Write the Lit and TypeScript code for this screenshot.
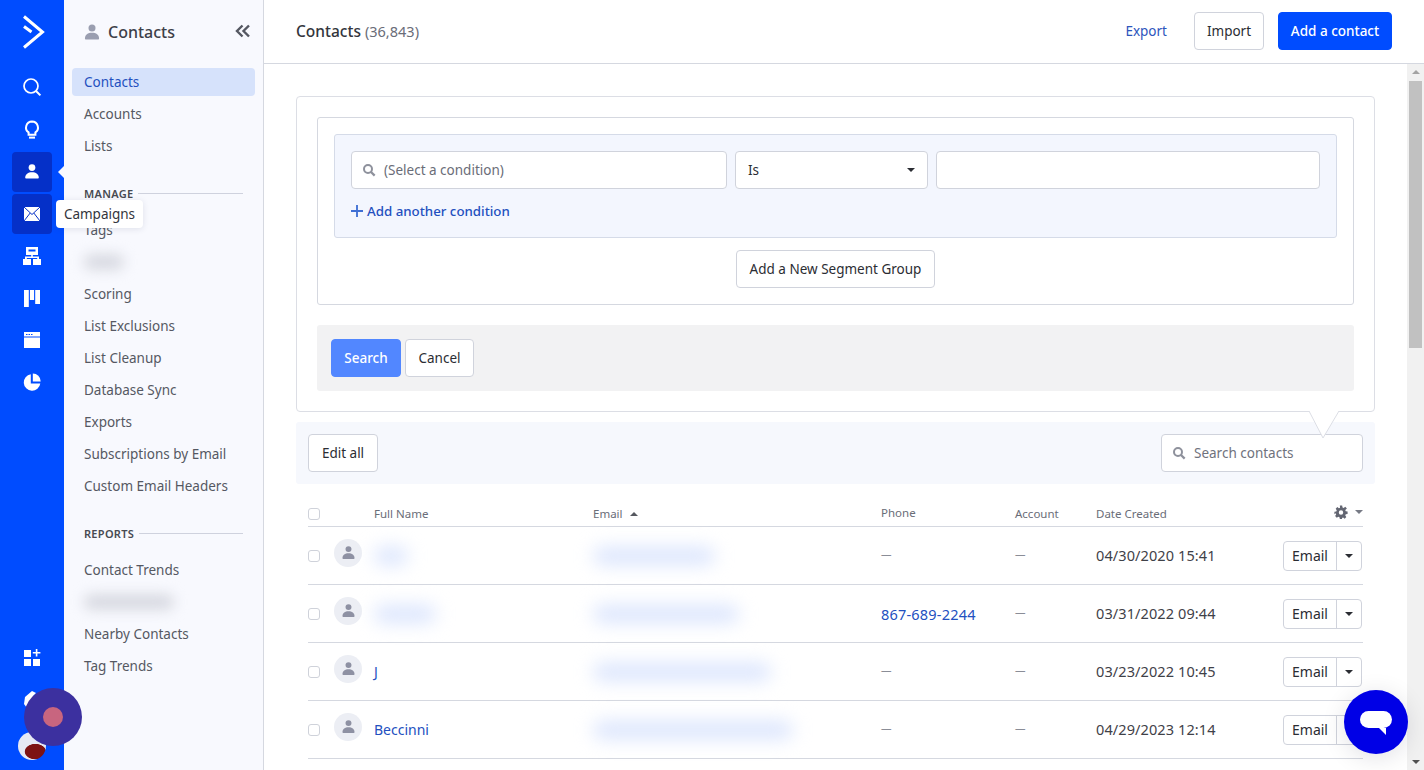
import { LitElement, html, css, svg } from 'lit'
import { customElement } from 'lit/decorators.js'

const person = svg`<circle cx="12" cy="7.200" r="4.200"/><path d="M3.500 20c0-4.600 3.600-7 8.500-7s8.500 2.400 8.500 7c0 .6-.4 1-1 1h-15c-.6 0-1-.4-1-1z"/>`

const railTop = [
    svg`<circle cx="11" cy="10" r="7" fill="none" stroke="#fff" stroke-width="1.700"/><path d="M16 15l4.400 4.400" stroke="#fff" stroke-width="2" fill="none"/>`,
    svg`<path d="M12 3.500a6 6 0 0 0-3.400 10.900v2.400h6.800v-2.400A6 6 0 0 0 12 3.500z" fill="none" stroke="#fff" stroke-width="2"/><path d="M9 19.600h6" stroke="#fff" stroke-width="2"/>`,
    svg`<g transform="translate(2.400 1.800) scale(.8)">${person}</g>`,
    svg`<path d="M4 5h16v14H4z" fill="#fff"/><path d="M4 5l8 7.500L20 5M4 19l6.200-8M20 19l-6.200-8" fill="none" stroke="#0530c8" stroke-width="1"/>`,
    svg`<path fill-rule="evenodd" d="M6 3h12v8h-5.200v1.400H19V15h2v6h-8v-6h4.200v-1H6.800v1H11v6H3v-6h2v-2.600h6.200V11H6zM8.500 5.500v2h7v-2z"/>`,
    svg`<path d="M4 4h4.800v17H4zM9.900 4h4.200v10H9.900zM15.200 4H20v14h-4.800z"/>`,
    svg`<path fill-rule="evenodd" d="M4 4h16v16H4zM4 9.500h16v-1H4zM6 6h1.500v1H6zm2.500 0H10v1H8.500zm2.500 0h1.500v1H11z"/>`,
    svg`<path d="M10.800 4.200A8.300 8.300 0 1 0 20.300 13.500h-9.500z"/><path d="M12.800 3.500v7.900h7.900a8 8 0 0 0-7.900-7.900z"/>`,
]

const apps = svg`<path d="M4 4h7v7H4zM4 13h7v7H4zM13 13h7v7h-7zM15.800 3h1.600v3h3v1.600h-3v3h-1.600v-3h-3V6h3z"/>`

const mag = svg`<circle cx="10.500" cy="10.500" r="6" fill="none" stroke="currentColor" stroke-width="3"/><path d="M15 15l5.500 5.500" stroke="currentColor" stroke-width="3.400" fill="none"/>`

const navMain = ['Contacts', 'Accounts', 'Lists']
// numbers are blurred-out entries, value is the width of the smudge
const navManage = ['Tags', 40, 'Scoring', 'List Exclusions', 'List Cleanup', 'Database Sync', 'Exports', 'Subscriptions by Email', 'Custom Email Headers']
const navReports = ['Contact Trends', 90, 'Nearby Contacts', 'Tag Trends']

const rows = [
    { nameBlur: 34, emailBlur: 122, phone: '', date: '04/30/2020 15:41' },
    { nameBlur: 62, emailBlur: 146, phone: '867-689-2244', date: '03/31/2022 09:44' },
    { name: 'J', emailBlur: 178, phone: '', date: '03/23/2022 10:45' },
    { name: 'Beccinni', emailBlur: 200, phone: '', date: '04/29/2023 12:14' },
]

@customElement('app-root')
export class AppRoot extends LitElement {
    static styles = css`
        :host {
            display: block;
            position: relative;
            width: 1424px;
            height: 770px;
            overflow: hidden;
            font-family: 'Noto Sans', 'Liberation Sans', sans-serif;
            font-size: 14px;
            color: #2b2d33;
            background: #fff;
        }
        * {
            box-sizing: border-box;
        }
        .app {
            display: flex;
            height: 770px;
        }

        /* icon rail */
        .rail {
            width: 64px;
            flex: none;
            background: #004cff;
            display: flex;
            flex-direction: column;
            align-items: center;
        }
        .logo {
            height: 68px;
            display: flex;
            align-items: center;
            justify-content: center;
            padding: 0 0 4px 3px;
        }
        .rail-item {
            width: 40px;
            height: 40px;
            margin-bottom: 2px;
            border-radius: 4px;
            display: flex;
            align-items: center;
            justify-content: center;
            fill: #fff;
            flex: none;
        }
        .rail-item svg {
            width: 24px;
            height: 24px;
        }
        .rail-item.on {
            background: #0530c8;
        }
        .rail-item.current {
            position: relative;
        }
        .rail-item.current::after {
            content: '';
            position: absolute;
            right: -12px;
            top: 14px;
            border: 6px solid transparent;
            border-left: none;
            border-right-color: #f8f9fe;
        }
        .rail-bottom {
            margin-top: auto;
            display: flex;
            flex-direction: column;
            align-items: center;
            padding-bottom: 10px;
        }
        .avatar-me {
            width: 28px;
            height: 28px;
            border-radius: 50%;
            margin-top: 10px;
            background: radial-gradient(ellipse 11px 8px at 62% 70%, #7d1212 92%, transparent 100%), #e6e9f4;
        }

        /* secondary nav */
        .side {
            width: 200px;
            flex: none;
            background: #f8f9fe;
            border-right: 1px solid #d5d8e0;
            padding: 0 8px;
        }
        .side-head {
            height: 64px;
            display: flex;
            align-items: center;
            padding: 0 4px 0 10px;
            font-size: 16px;
            font-weight: 500;
            color: #3d4048;
        }
        .side-head svg {
            width: 20px;
            height: 20px;
            fill: #9a9eb0;
            margin-right: 6px;
        }
        .side-head .collapse {
            margin: 0 0 2px auto;
            width: 16px;
            height: 16px;
            fill: none;
            stroke: #555862;
            stroke-width: 2.400;
        }
        .nav {
            display: flex;
            flex-direction: column;
            gap: 4px;
            padding-top: 4px;
        }
        .nav-item {
            height: 28px;
            line-height: 28px;
            padding-left: 12px;
            border-radius: 4px;
            color: #555862;
            font-size: 13.500px;
        }
        .nav-item.active {
            background: #d6e2fb;
            color: #2350bf;
        }
        .nav-item .smudge {
            display: block;
            height: 14px;
            margin-top: 7px;
            border-radius: 7px;
            background: #d3d5dd;
            filter: blur(7px);
        }
        .nav-head {
            display: flex;
            align-items: center;
            gap: 5px;
            margin: 26px 0 10px;
            padding: 0 12px 2px;
            font-size: 11px;
            font-weight: 600;
            color: #474a52;
            letter-spacing: 0.3px;
            height: 16px;
        }
        .nav-head::after {
            content: '';
            flex: 1;
            border-top: 1px solid #cfd2de;
        }

        /* main column */
        .main {
            flex: 1;
            min-width: 0;
            display: flex;
            flex-direction: column;
        }
        .top {
            height: 64px;
            flex: none;
            border-bottom: 1px solid #d5d8e0;
            display: flex;
            align-items: center;
            padding: 0 32px 1px;
        }
        .top h1 {
            margin: 0;
            font-size: 15.500px;
            font-weight: 500;
            color: #33353c;
        }
        .top .count {
            margin: 0 0 0 4px;
            color: #6a6d78;
            font-size: 14.500px;
        }
        .top .export {
            margin: 0 27px 0 auto;
            color: #2d55bd;
            font-size: 13.500px;
        }
        .btn {
            height: 38px;
            display: inline-flex;
            align-items: center;
            justify-content: center;
            border: 1px solid #d0d3dc;
            border-radius: 4px;
            background: #fff;
            color: #2b2d33;
            font-size: 13.500px;
            padding-bottom: 1px;
            flex: none;
        }
        .btn.import {
            width: 70px;
            margin-right: 14px;
        }
        .btn.primary {
            width: 114px;
            background: #004cff;
            border-color: #004cff;
            color: #fff;
            font-weight: 500;
        }
        .body {
            flex: 1;
            min-height: 0;
            display: flex;
        }
        .scroll {
            flex: 1;
            min-width: 0;
            overflow: hidden;
            padding: 32px 32px 0;
        }

        /* fake scrollbar, matches the browser's own */
        .bar {
            width: 17px;
            flex: none;
            background: #f1f1f1;
            display: flex;
            flex-direction: column;
            align-items: center;
            padding: 6px 0;
        }
        .bar i {
            width: 0;
            height: 0;
            border: 4px solid transparent;
            flex: none;
        }
        .bar .up {
            border-top: none;
            border-bottom-color: #a3a3a3;
        }
        .bar .down {
            border-bottom: none;
            border-top-color: #505050;
            margin-top: auto;
        }
        .bar .thumb {
            width: 13px;
            height: 267px;
            margin-top: 7px;
            background: #c1c1c1;
        }

        /* segment builder */
        .panel {
            height: 316px;
            border: 1px solid #dcdee5;
            border-radius: 4px;
            padding: 20px;
        }
        .group {
            height: 188px;
            border: 1px solid #d5d8e0;
            border-radius: 3px;
            padding: 16px;
        }
        .cond {
            height: 104px;
            background: #f3f6fe;
            border: 1px solid #d5dbe8;
            border-radius: 3px;
            padding: 16px;
        }
        .cond-row {
            display: flex;
            gap: 8px;
        }
        .field {
            height: 38px;
            border: 1px solid #d0d3dc;
            border-radius: 4px;
            background: #fff;
            display: flex;
            align-items: center;
            padding: 0 12px 1px;
            color: #2b2d33;
            font-size: 13.500px;
        }
        .field svg {
            width: 16px;
            height: 16px;
            color: #8e919c;
            margin: 0 7px 0 -3px;
            flex: none;
        }
        .field.cond-name {
            width: 376px;
            color: #6a6d78;
        }
        .field.cond-op {
            width: 193px;
        }
        .field.cond-val {
            width: 384px;
        }
        .caret {
            width: 0;
            height: 0;
            border: 4px solid transparent;
            border-bottom: none;
            border-top-color: #2b2d33;
            margin-left: auto;
            flex: none;
        }
        .add-cond {
            display: flex;
            align-items: center;
            gap: 4px;
            margin-top: 11px;
            color: #2350bf;
            font-weight: 500;
            font-size: 13.300px;
            height: 22px;
        }
        .add-cond svg {
            width: 12px;
            height: 12px;
            stroke: #3f6fd4;
            stroke-width: 2;
        }
        .group-foot {
            display: flex;
            justify-content: center;
            margin-top: 12px;
        }
        .group-foot .btn {
            width: 199px;
        }
        .actions {
            height: 66px;
            margin-top: 20px;
            background: #f2f2f3;
            border-radius: 3px;
            display: flex;
            align-items: center;
            gap: 4px;
            padding-left: 14px;
        }
        .btn.search {
            width: 70px;
            background: #5287ff;
            border-color: #5287ff;
            color: #fff;
            font-weight: 500;
        }
        .btn.cancel {
            width: 69px;
        }

        /* list */
        .toolbar {
            height: 62px;
            margin-top: 10px;
            background: #f6f8fd;
            border-radius: 3px;
            display: flex;
            align-items: center;
            justify-content: space-between;
            padding: 0 12px;
            position: relative;
        }
        .btn.edit {
            width: 70px;
        }
        .search-box {
            width: 202px;
            color: #6f727d;
        }
        .pointer {
            position: absolute;
            right: 36px;
            top: -11px;
            width: 30px;
            height: 28px;
        }
        .table {
            padding: 0 12px;
        }
        .row {
            display: grid;
            grid-template-columns: 26px 40px 219px 288px 134px 81px 1fr 80px;
            align-items: center;
            border-bottom: 1px solid #d5d8e0;
            height: 58px;
        }
        .row.head {
            height: 43px;
            font-size: 11.500px;
            color: #6a6d78;
            padding-top: 17px;
        }
        .row.head .phone-head {
            margin-top: -2px;
        }
        .check {
            width: 12px;
            height: 12px;
            border: 1px solid #cfd2da;
            border-radius: 3px;
            background: #fff;
        }
        .pic {
            width: 28px;
            height: 28px;
            border-radius: 50%;
            background: #eceef4;
            display: flex;
            align-items: center;
            justify-content: center;
            margin: -6px 0 0 0;
            fill: #8e91a3;
        }
        .pic svg {
            width: 17px;
            height: 17px;
        }
        .name,
        .phone {
            color: #2350bf;
            font-size: 14px;
        }
        .phone {
            font-size: 14.500px;
            letter-spacing: 0.2px;
        }
        .blur {
            display: block;
            height: 18px;
            border-radius: 9px;
            background: #dbe5fd;
            filter: blur(9px);
        }
        .dash {
            display: block;
            color: #8a8d97;
            font-size: 10.500px;
            margin-top: -3px;
        }
        .date {
            color: #3f4148;
            font-size: 14.500px;
            letter-spacing: 0.1px;
            padding-bottom: 1px;
        }
        .sort {
            display: inline-block;
            width: 0;
            height: 0;
            border: 4px solid transparent;
            border-top: none;
            border-bottom-color: #55585f;
            margin-left: 7px;
            vertical-align: 2px;
        }
        .gear {
            display: flex;
            align-items: center;
            justify-content: flex-end;
            gap: 7px;
            margin-top: -3px;
            color: #636672;
        }
        .gear svg {
            width: 14px;
            height: 14px;
            fill: #636672;
        }
        .gear .caret {
            margin-left: 0;
            border-top-color: #777a85;
        }
        .split {
            display: flex;
            height: 30px;
            border: 1px solid #d0d3dc;
            border-radius: 4px;
            width: 79px;
            justify-self: end;
            margin-right: 1px;
        }
        .split span {
            width: 53px;
            display: flex;
            align-items: center;
            justify-content: center;
            border-right: 1px solid #d0d3dc;
            padding-bottom: 1px;
        }
        .split div {
            flex: 1;
            display: flex;
            align-items: center;
            justify-content: center;
        }
        .split .caret {
            margin: 0;
        }

        /* floating stuff */
        .tip {
            position: absolute;
            left: 56px;
            top: 200px;
            width: 87px;
            height: 28px;
            line-height: 28px;
            text-align: center;
            background: #fff;
            border-radius: 4px;
            box-shadow: 0 1px 6px rgba(40, 50, 90, 0.12);
            font-size: 13.500px;
            color: #33353c;
        }
        .rec {
            position: absolute;
            left: 24px;
            top: 688px;
            width: 58px;
            height: 58px;
            border-radius: 50%;
            background: #3c309f;
            display: flex;
            align-items: center;
            justify-content: center;
        }
        .rec span {
            width: 20px;
            height: 20px;
            border-radius: 50%;
            background: #c8657f;
        }
        .chat {
            position: absolute;
            left: 1344px;
            top: 690px;
            width: 64px;
            height: 64px;
            border-radius: 50%;
            background: #0000e6;
            box-shadow: 0 4px 24px rgba(0, 0, 40, 0.12);
            display: flex;
            align-items: center;
            justify-content: center;
        }
        .chat svg {
            width: 34px;
            height: 28px;
            fill: #fff;
        }
    `

    private navItem(item: string | number, active = false) {
        if (typeof item === 'number') {
            return html`<div class="nav-item"><span class="smudge" style="width:${item}px"></span></div>`
        }
        return html`<div class="nav-item ${active ? 'active' : ''}">${item}</div>`
    }

    render() {
        return html`
            <div class="app">
                <div class="rail">
                    <div class="logo">
                        <svg width="24" height="34" viewBox="0 0 24 34" fill="none" stroke="#fff" stroke-width="3">
                            <path d="M2 1.500L20.500 17 2 32.500" />
                            <path d="M2 11.500l7.500 5.500" />
                        </svg>
                    </div>
                    ${railTop.map(
                        (icon, i) => html`
                            <div class="rail-item ${i === 2 || i === 3 ? 'on' : ''} ${i === 2 ? 'current' : ''}">
                                <svg viewBox="0 0 24 24">${icon}</svg>
                            </div>
                        `
                    )}
                    <div class="rail-bottom">
                        <div class="rail-item"><svg viewBox="0 0 24 24">${apps}</svg></div>
                        <div class="rail-item">
                            <svg viewBox="0 0 24 24"><path d="M5 9l7-6 4 2-3 3 3 3-9 9-3-4z" /></svg>
                        </div>
                        <div class="avatar-me"></div>
                    </div>
                </div>

                <div class="side">
                    <div class="side-head">
                        <svg viewBox="0 0 24 24">${person}</svg>
                        Contacts
                        <svg class="collapse" viewBox="0 0 16 16"><path d="M7.500 2.500L2 8l5.500 5.500M14 2.500L8.500 8l5.500 5.500" /></svg>
                    </div>
                    <div class="nav">${navMain.map((n, i) => this.navItem(n, i === 0))}</div>
                    <div class="nav-head">MANAGE</div>
                    <div class="nav">${navManage.map((n) => this.navItem(n))}</div>
                    <div class="nav-head">REPORTS</div>
                    <div class="nav">${navReports.map((n) => this.navItem(n))}</div>
                </div>

                <div class="main">
                    <div class="top">
                        <h1>Contacts</h1>
                        <span class="count">(36,843)</span>
                        <span class="export">Export</span>
                        <div class="btn import">Import</div>
                        <div class="btn primary">Add a contact</div>
                    </div>
                    <div class="body">
                        <div class="scroll">
                            <div class="panel">
                                <div class="group">
                                    <div class="cond">
                                        <div class="cond-row">
                                            <div class="field cond-name">
                                                <svg viewBox="0 0 24 24">${mag}</svg>(Select a condition)
                                            </div>
                                            <div class="field cond-op">Is<span class="caret"></span></div>
                                            <div class="field cond-val"></div>
                                        </div>
                                        <div class="add-cond">
                                            <svg viewBox="0 0 13 13"><path d="M6.500 0v13M0 6.500h13" /></svg>
                                            Add another condition
                                        </div>
                                    </div>
                                    <div class="group-foot"><div class="btn">Add a New Segment Group</div></div>
                                </div>
                                <div class="actions">
                                    <div class="btn search">Search</div>
                                    <div class="btn cancel">Cancel</div>
                                </div>
                            </div>

                            <div class="toolbar">
                                <div class="btn edit">Edit all</div>
                                <div class="field search-box"><svg viewBox="0 0 24 24">${mag}</svg>Search contacts</div>
                                <svg class="pointer" viewBox="0 0 30 28">
                                    <path d="M0 0L14 27 30 0z" fill="#fff" />
                                    <path d="M0 0L14 27 30 0" fill="none" stroke="#dcdee5" />
                                </svg>
                            </div>

                            <div class="table">
                                <div class="row head">
                                    <span class="check"></span>
                                    <span></span>
                                    <span>Full Name</span>
                                    <span>Email<i class="sort"></i></span>
                                    <span class="phone-head">Phone</span>
                                    <span>Account</span>
                                    <span>Date Created</span>
                                    <div class="gear">
                                        <svg viewBox="0 0 24 24">
                                            <path fill-rule="evenodd" d="M10 1h4l.6 3.200 2 .8 2.700-1.800 2.800 2.800L19.300 8.700l.8 2 3.200.6v4l-3.200.6-.8 2 1.800 2.700-2.800 2.800-2.700-1.800-2 .8L14 24h-4l-.6-3.200-2-.8-2.700 1.800-2.800-2.800 1.800-2.700-.8-2L.7 15.700v-4l3.200-.6.800-2L2.900 6.400 5.700 3.600l2.700 1.800 2-.8zM12 9a3.800 3.800 0 1 0 0 7.600A3.800 3.800 0 0 0 12 9z" />
                                        </svg>
                                        <span class="caret"></span>
                                    </div>
                                </div>
                                ${rows.map(
                                    (r) => html`
                                        <div class="row">
                                            <span class="check"></span>
                                            <div class="pic"><svg viewBox="0 0 24 24">${person}</svg></div>
                                            <div class="name">
                                                ${r.name ?? html`<span class="blur" style="width:${r.nameBlur}px"></span>`}
                                            </div>
                                            <div><span class="blur" style="width:${r.emailBlur}px"></span></div>
                                            <div>${r.phone ? html`<span class="phone">${r.phone}</span>` : html`<span class="dash">—</span>`}</div>
                                            <div class="dash">—</div>
                                            <div class="date">${r.date}</div>
                                            <div class="split">
                                                <span>Email</span>
                                                <div><i class="caret"></i></div>
                                            </div>
                                        </div>
                                    `
                                )}
                            </div>
                        </div>
                        <div class="bar">
                            <i class="up"></i>
                            <div class="thumb"></div>
                            <i class="down"></i>
                        </div>
                    </div>
                </div>
            </div>

            <div class="tip">Campaigns</div>
            <div class="rec"><span></span></div>
            <div class="chat">
                <svg viewBox="0 0 34 28">
                    <rect x="1" y="3" width="32" height="17" rx="8.500" />
                    <path d="M20 20h7v7z" />
                </svg>
            </div>
        `
    }
}
